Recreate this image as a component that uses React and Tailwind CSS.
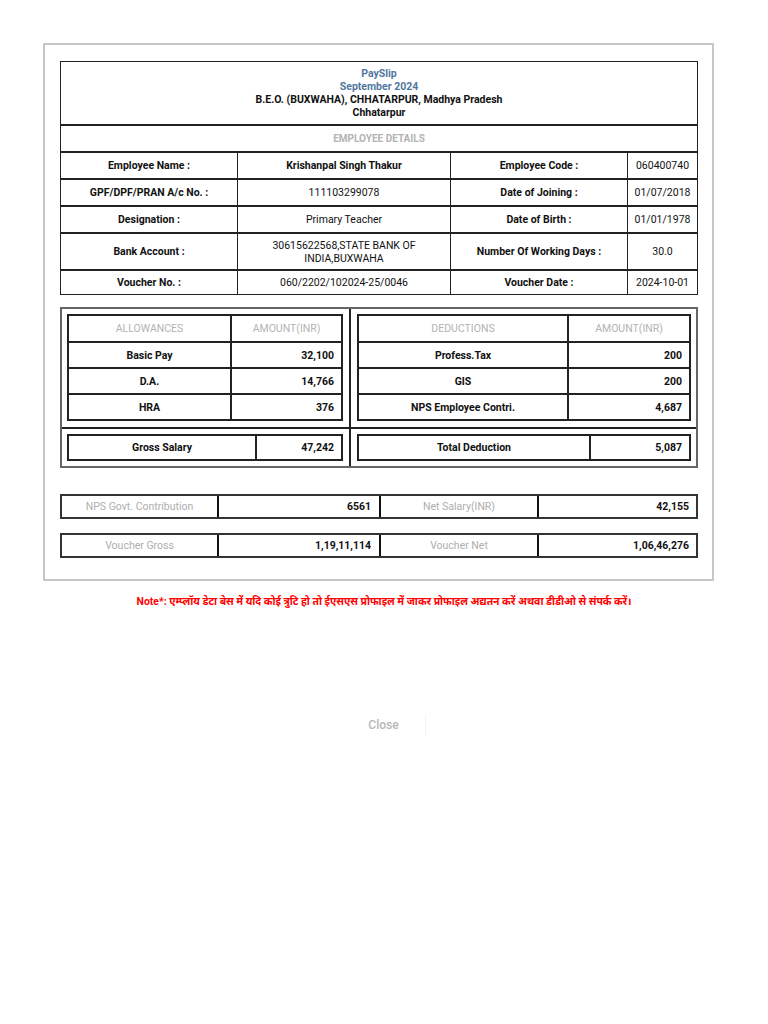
const details = [
  ['Employee Name :', 'Krishanpal Singh Thakur', 'Employee Code :', '060400740', 'h-[27px]', true],
  ['GPF/DPF/PRAN A/c No. :', '111103299078', 'Date of Joining :', '01/07/2018', 'h-[27px]', false],
  ['Designation :', 'Primary Teacher', 'Date of Birth :', '01/01/1978', 'h-[27px]', false],
  ['Bank Account :', ['30615622568,STATE BANK OF', 'INDIA,BUXWAHA'], 'Number Of Working Days :', '30.0', 'h-[37px]', false],
  ['Voucher No. :', '060/2202/102024-25/0046', 'Voucher Date :', '2024-10-01', 'h-[25px]', false],
];

const allowances = [
  ['Basic Pay', '32,100'],
  ['D.A.', '14,766'],
  ['HRA', '376'],
];

const deductions = [
  ['Profess.Tax', '200'],
  ['GIS', '200'],
  ['NPS Employee Contri.', '4,687'],
];

const Cell = ({ children, className = '' }) => (
  <div className={`flex flex-col items-center justify-center text-center whitespace-nowrap ${className}`}>{children}</div>
);

const AmountTable = ({ head, rows, cols }) => (
  <div className="border-2 border-[#222] flex flex-col">
    <div className={`grid ${cols} h-[25px]`}>
      <Cell className="border-r-2 border-[#222] text-[#b3b3b3] uppercase">{head}</Cell>
      <Cell className="text-[#b3b3b3]">AMOUNT(INR)</Cell>
    </div>
    {rows.map(([label, amount]) => (
      <div key={label} className={`grid ${cols} h-[26px] border-t-2 border-[#222]`}>
        <Cell className="border-r-2 border-[#222] font-bold text-[#111]">{label}</Cell>
        <div className="flex items-center justify-end pr-[7px] font-bold text-[#111]">{amount}</div>
      </div>
    ))}
  </div>
);

const TotalRow = ({ label, amount, cols }) => (
  <div className={`grid ${cols} h-[27px] border-2 border-[#222]`}>
    <Cell className="border-r-2 border-[#222] font-bold text-[#111]">{label}</Cell>
    <div className="flex items-center justify-end pr-[7px] font-bold text-[#111]">{amount}</div>
  </div>
);

const SummaryRow = ({ a, b, c, d }) => (
  <div className="grid grid-cols-[157px_162px_158px_1fr] h-[25px] border-2 border-[#333]">
    <Cell className="border-r-2 border-[#111] text-[#aeaeae]">{a}</Cell>
    <div className="flex items-center justify-end pr-[8px] border-r-2 border-[#111] font-bold text-[#111]">{b}</div>
    <Cell className="border-r-2 border-[#111] text-[#aeaeae]">{c}</Cell>
    <div className="flex items-center justify-end pr-[7px] font-bold text-[#111]">{d}</div>
  </div>
);

export default function App() {
  return (
    <div
      className="min-h-screen bg-white text-[10.5px] leading-[13px] text-[#111]"
      style={{ fontFamily: 'Roboto, "Noto Sans", "Noto Sans Devanagari", sans-serif' }}
    >
      <div className="pt-[43px] pl-[43px]">
        <div className="w-[671px] h-[538px] border-2 border-[#c6c6c6] pl-[15px] pt-[16px]">
          {/* Header + employee details */}
          <div className="w-[638px] border border-[#222]">
            <div className="h-[62px] flex flex-col items-center justify-center font-bold">
              <span className="text-[#52789f]">PaySlip</span>
              <span className="text-[#52789f]">September 2024</span>
              <span>B.E.O. (BUXWAHA), CHHATARPUR, Madhya Pradesh</span>
              <span>Chhatarpur</span>
            </div>
            <div className="h-[27px] border-t-2 border-[#222] flex items-center justify-center text-[10px] font-bold text-[#b3b3b3]">
              EMPLOYEE DETAILS
            </div>
            {details.map(([l1, v1, l2, v2, h, boldVal]) => (
              <div key={l1} className={`grid grid-cols-[177px_213px_177px_1fr] ${h} border-t-2 border-[#222]`}>
                <Cell className="border-r border-[#222] font-bold">{l1}</Cell>
                <Cell className={`border-r border-[#222] ${boldVal ? 'font-bold' : ''}`}>
                  {Array.isArray(v1) ? v1.map((t) => <span key={t}>{t}</span>) : v1}
                </Cell>
                <Cell className="border-r border-[#222] font-bold">{l2}</Cell>
                <Cell>{v2}</Cell>
              </div>
            ))}
          </div>

          {/* Allowances / deductions */}
          <div className="w-[638px] mt-[12px] border-2 border-[#666] flex flex-col">
            <div className="flex h-[120px] border-b-2 border-[#222]">
              <div className="w-[289px] border-r-2 border-[#222] pl-[5px] pt-[5px]">
                <div className="w-[276px]">
                  <AmountTable head="ALLOWANCES" rows={allowances} cols="grid-cols-[163px_1fr]" />
                </div>
              </div>
              <div className="flex-1 pl-[6px] pt-[5px]">
                <div className="w-[334px]">
                  <AmountTable head="DEDUCTIONS" rows={deductions} cols="grid-cols-[210px_1fr]" />
                </div>
              </div>
            </div>
            <div className="flex h-[37px]">
              <div className="w-[289px] border-r-2 border-[#222] pl-[5px] pt-[5px]">
                <div className="w-[276px]">
                  <TotalRow label="Gross Salary" amount="47,242" cols="grid-cols-[188px_1fr]" />
                </div>
              </div>
              <div className="flex-1 pl-[6px] pt-[5px]">
                <div className="w-[334px]">
                  <TotalRow label="Total Deduction" amount="5,087" cols="grid-cols-[232px_1fr]" />
                </div>
              </div>
            </div>
          </div>

          {/* Summary */}
          <div className="w-[638px] mt-[26px] flex flex-col gap-[14px]">
            <SummaryRow a="NPS Govt. Contribution" b="6561" c="Net Salary(INR)" d="42,155" />
            <SummaryRow a="Voucher Gross" b="1,19,11,114" c="Voucher Net" d="1,06,46,276" />
          </div>
        </div>
      </div>

      <p className="mt-[14px] text-center font-bold text-[#ff0000] text-[10.4px]">
        Note*: एम्प्लॉय डेटा बेस में यदि कोई त्रुटि हो तो ईएसएस प्रोफाइल में जाकर प्रोफाइल अद्यतन करें अथवा डीडीओ से संपर्क करें।
      </p>

      <div className="mt-[106px] flex justify-center">
        <button className="w-[84px] h-[22px] border-r border-[#f2f2f2] text-[12px] font-medium text-[#b8b8b8]">
          Close
        </button>
      </div>
    </div>
  );
}
